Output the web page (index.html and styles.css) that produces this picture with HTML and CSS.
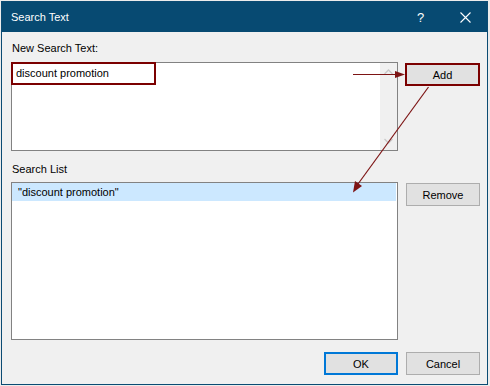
FILE: index.html
```html
<!DOCTYPE html>
<html lang="en">

<head>
    <meta charset="UTF-8" />
    <title>Search Text</title>
    <link rel="stylesheet" href="styles.css">
</head>

<body>
    <div class="window">
        <div class="titlebar">
            <span class="title">Search Text</span>
            <span class="cap help">?</span>
            <span class="cap close">
                <svg width="11" height="11" viewBox="0 0 11 11">
                    <path d="M0.5 0.5 L10.5 10.5 M10.5 0.5 L0.5 10.5" stroke="#fff" stroke-width="1.1" fill="none" />
                </svg>
            </span>
        </div>

        <div class="content">
            <div class="label first">New Search Text:</div>
            <div class="row">
                <div class="textbox">
                    <div class="mark"></div>
                    <span class="entry">discount promotion</span>
                    <div class="scrollbar">
                        <svg width="9" height="6" viewBox="0 0 9 6">
                            <path d="M0.5 5 L4.5 1 L8.5 5" stroke="#c9c9c9" stroke-width="1.3" fill="none" />
                        </svg>
                        <svg width="9" height="6" viewBox="0 0 9 6">
                            <path d="M0.5 1 L4.5 5 L8.5 1" stroke="#c9c9c9" stroke-width="1.3" fill="none" />
                        </svg>
                    </div>
                </div>
                <button type="button" class="btn add">Add</button>
            </div>

            <div class="label second">Search List</div>
            <div class="row">
                <div class="listbox">
                    <div class="item selected">"discount promotion"</div>
                </div>
                <button type="button" class="btn side">Remove</button>
            </div>

            <div class="footer">
                <button type="button" class="btn default">OK</button>
                <button type="button" class="btn">Cancel</button>
            </div>
        </div>
    </div>

    <!-- annotation arrows -->
    <svg class="arrows" width="490" height="386" viewBox="0 0 490 386">
        <line x1="353" y1="74.5" x2="397" y2="74.5" stroke="#7d1414" stroke-width="1.2" />
        <polygon points="405,74.5 395,71 395,78" fill="#7d1414" />
        <line x1="428.5" y1="87" x2="358" y2="184" stroke="#7d1414" stroke-width="1.2" />
        <polygon points="353,192.5 355,181 362,186" fill="#7d1414" />
    </svg>
</body>

</html>
```

FILE: styles.css
```css
body {
    margin: 0;
    background: #ececec;
    font-family: "Liberation Sans", Arial, sans-serif;
    font-size: 11px;
    color: #000;
    position: relative;
    width: 490px;
    height: 386px;
    overflow: hidden;
}

.window {
    box-sizing: border-box;
    margin: 1px 0 0 1px;
    width: 487px;
    height: 384px;
    border: 1px solid #0b4b73;
    background: #f0f0f0;
    display: flex;
    flex-direction: column;
}

.titlebar {
    height: 30px;
    background: #074a72;
    color: #fff;
    display: flex;
    align-items: center;
}

.title {
    flex: 1;
    padding-left: 9px;
    font-size: 11px;
}

.cap {
    width: 45px;
    height: 30px;
    display: flex;
    align-items: center;
    justify-content: center;
}

.help {
    font-size: 13px;
    padding-top: 1px;
    box-sizing: border-box;
}

.close {
    width: 44px;
}

.content {
    padding: 0 7px 0 9px;
}

.label {
    height: 14px;
    line-height: 14px;
    padding-left: 1px;
}

.label.first {
    margin-top: 9px;
    margin-bottom: 7px;
}

.label.second {
    margin-top: 11px;
    margin-bottom: 6px;
}

.row {
    display: grid;
    grid-template-columns: 387px 74px;
    column-gap: 8px;
    align-items: start;
}

.textbox,
.listbox {
    box-sizing: border-box;
    background: #fff;
    border: 1px solid #828282;
    position: relative;
}

.textbox {
    height: 89px;
}

.listbox {
    height: 158px;
}

.entry {
    display: block;
    padding: 3px 0 0 4px;
    line-height: 14px;
}

.mark {
    position: absolute;
    left: -1px;
    top: -1px;
    width: 145px;
    height: 23px;
    box-sizing: border-box;
    border: 2px solid #7b0000;
}

.scrollbar {
    position: absolute;
    right: 0;
    top: 0;
    bottom: 0;
    width: 17px;
    background: #f0f0f0;
    display: flex;
    flex-direction: column;
    align-items: center;
    justify-content: space-between;
    padding: 6px 0 6px;
    box-sizing: border-box;
}

.item {
    height: 18px;
    line-height: 18px;
    padding-left: 6px;
    margin-right: 1px;
}

.selected {
    background: #cce8ff;
}

.btn {
    box-sizing: border-box;
    width: 74px;
    height: 23px;
    margin: 1px 0 0;
    padding: 0;
    background: #e1e1e1;
    border: 1px solid #adadad;
    font-family: inherit;
    font-size: 11px;
    color: #000;
}

.add {
    width: 75px;
    margin-left: -1px;
    border: 2px solid #7b0000;
}

.footer {
    display: flex;
    justify-content: flex-end;
    gap: 8px;
    margin-top: 12px;
}

.footer .btn {
    margin: 0;
}

.default {
    border: 2px solid #0078d7;
}

.arrows {
    position: absolute;
    left: 0;
    top: 0;
    pointer-events: none;
}
```
